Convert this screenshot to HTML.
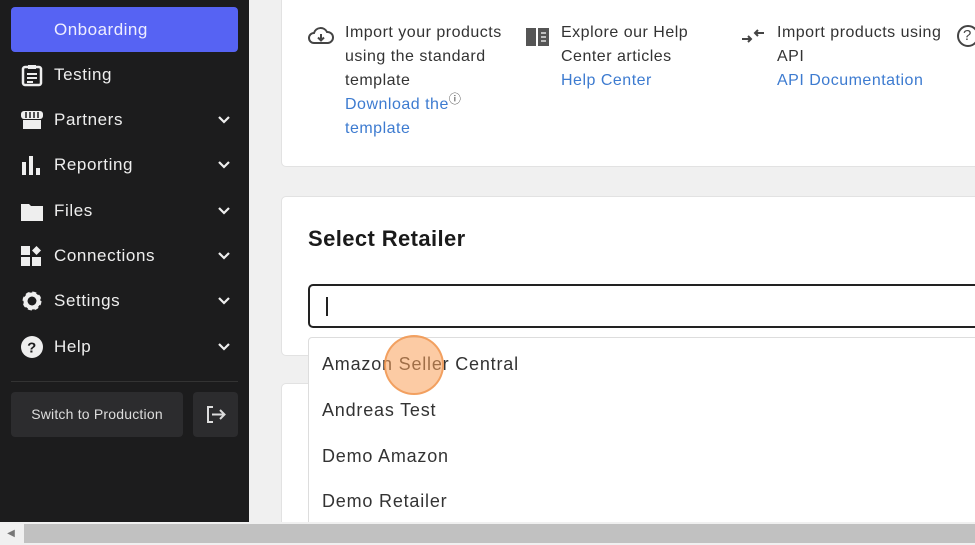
<!DOCTYPE html>
<html><head><style>
*{margin:0;padding:0;box-sizing:border-box}
body{width:975px;height:545px;overflow:hidden;background:#f0f0f0;font-family:"Liberation Sans",sans-serif;position:relative}
.sb{position:absolute;left:0;top:0;width:249px;height:522px;background:#1c1c1d}
.onb{position:absolute;left:11px;top:7px;width:227px;height:45px;background:#5663f3;border-radius:4px;color:#eef;font-size:17px;line-height:45px;padding-left:43px;letter-spacing:0.5px}
.it{position:absolute;left:0;width:249px;height:30px;color:#eee;font-size:17px;line-height:30px;letter-spacing:0.6px}
.it span{position:absolute;left:54px}
.it svg.ic{position:absolute;left:20px;top:3px}
.it .ch{position:absolute;left:216px;top:7px}
.div{position:absolute;left:11px;top:381px;width:227px;height:1px;background:#333}
.sw{position:absolute;left:11px;top:392px;width:172px;height:45px;background:#2c2c2e;border-radius:4px;color:#ddd;font-size:14px;line-height:45px;text-align:center;letter-spacing:0.2px}
.lo{position:absolute;left:193px;top:392px;width:45px;height:45px;background:#2c2c2e;border-radius:4px}
.card{position:absolute;background:#fff;border:1px solid #e2e2e2;border-radius:5px}
.t{position:absolute;font-size:16px;color:#333;line-height:24px;letter-spacing:0.5px}
.a{color:#3d7bd0}
.dd{position:absolute;left:308px;top:337px;width:680px;height:200px;background:#fff;border:1px solid #ddd;border-radius:4px}
.o{position:absolute;left:322px;font-size:18px;color:#333;letter-spacing:0.8px}
.sc{position:absolute;left:0;top:522px;width:975px;height:23px;background:#f0f0f0}
</style></head><body>
<div class="sb">
<div class="onb">Onboarding</div>
<div class="it" style="top:60px"><svg class="ic" width="24" height="24" viewBox="0 0 24 24"><rect x="3" y="4" width="18" height="18" rx="2" fill="none" stroke="#eee" stroke-width="2.5"/><rect x="8" y="2" width="8" height="4" fill="#eee"/><path d="M7 11h10M7 15h10M7 19h6" stroke="#eee" stroke-width="2"/></svg><span>Testing</span></div>
<div class="it" style="top:105px"><svg class="ic" width="24" height="24" viewBox="0 0 24 24"><rect x="1" y="3" width="22" height="8" rx="3" fill="#eee"/><rect x="3" y="12" width="18" height="9" fill="#eee"/><path d="M6 4v6M10 4v6M14 4v6M18 4v6" stroke="#1c1c1d" stroke-width="1.5"/></svg><span>Partners</span><svg class="ch" width="16" height="16" viewBox="0 0 16 16"><path d="M3 5l5 5 5-5" fill="none" stroke="#eee" stroke-width="2.2"/></svg></div>
<div class="it" style="top:150px"><svg class="ic" width="24" height="24" viewBox="0 0 24 24"><rect x="2" y="9" width="4" height="13" fill="#eee"/><rect x="9" y="3" width="4" height="19" fill="#eee"/><rect x="16" y="15" width="4" height="7" fill="#eee"/></svg><span>Reporting</span><svg class="ch" width="16" height="16" viewBox="0 0 16 16"><path d="M3 5l5 5 5-5" fill="none" stroke="#eee" stroke-width="2.2"/></svg></div>
<div class="it" style="top:196px"><svg class="ic" width="24" height="24" viewBox="0 0 24 24"><path d="M1 5h8l2 2h12v15H1z" fill="#eee"/></svg><span>Files</span><svg class="ch" width="16" height="16" viewBox="0 0 16 16"><path d="M3 5l5 5 5-5" fill="none" stroke="#eee" stroke-width="2.2"/></svg></div>
<div class="it" style="top:241px"><svg class="ic" width="24" height="24" viewBox="0 0 24 24"><rect x="1" y="2" width="9" height="9" fill="#eee"/><rect x="1" y="13" width="9" height="9" fill="#eee"/><rect x="12" y="13" width="9" height="9" fill="#eee"/><path d="M16.5 2l4.5 4.5-4.5 4.5-4.5-4.5z" fill="#eee"/></svg><span>Connections</span><svg class="ch" width="16" height="16" viewBox="0 0 16 16"><path d="M3 5l5 5 5-5" fill="none" stroke="#eee" stroke-width="2.2"/></svg></div>
<div class="it" style="top:286px"><svg class="ic" width="24" height="24" viewBox="0 0 24 24"><circle cx="12" cy="12" r="7" fill="none" stroke="#eee" stroke-width="5" stroke-dasharray="3.3 2.2"/><circle cx="12" cy="12" r="6.5" fill="none" stroke="#eee" stroke-width="4"/></svg><span>Settings</span><svg class="ch" width="16" height="16" viewBox="0 0 16 16"><path d="M3 5l5 5 5-5" fill="none" stroke="#eee" stroke-width="2.2"/></svg></div>
<div class="it" style="top:332px"><svg class="ic" width="24" height="24" viewBox="0 0 24 24"><circle cx="12" cy="12" r="11" fill="#eee"/><text x="12" y="17.5" font-size="15" font-weight="bold" text-anchor="middle" fill="#1c1c1d" font-family="Liberation Sans">?</text></svg><span>Help</span><svg class="ch" width="16" height="16" viewBox="0 0 16 16"><path d="M3 5l5 5 5-5" fill="none" stroke="#eee" stroke-width="2.2"/></svg></div>
<div class="div"></div>
<div class="sw">Switch to Production</div>
<div class="lo"><svg width="45" height="45" viewBox="0 0 45 45"><path d="M20 15h-5v15h5" fill="none" stroke="#ddd" stroke-width="2"/><path d="M19 22.5h12M27 18l4.5 4.5L27 27" fill="none" stroke="#ddd" stroke-width="2"/></svg></div>
</div>
<div class="card" style="left:281px;top:-5px;width:710px;height:172px"></div>
<svg style="position:absolute;left:307px;top:25px" width="28" height="22" viewBox="0 0 28 22"><path d="M7 18a5 5 0 0 1 0-10 7 7 0 0 1 13-1 5.5 5.5 0 0 1 1 11z" fill="none" stroke="#444" stroke-width="2"/><path d="M14 9v6M11 12.5l3 3 3-3" fill="none" stroke="#444" stroke-width="2"/></svg>
<div class="t" style="left:345px;top:21px">Import your products<br>using the standard<br>template<br><span class="a">Download the</span><span style="font-size:12px;position:relative;top:-6px">ⓘ</span><br><span class="a">template</span></div>
<svg style="position:absolute;left:524px;top:26px" width="28" height="22" viewBox="0 0 28 22"><path d="M2 2h10v18H2zM14 2h11v18H14z" fill="#555"/><path d="M17 7h5M17 11h5M17 15h5" stroke="#fff" stroke-width="1.3"/></svg>
<div class="t" style="left:561px;top:21px">Explore our Help<br>Center articles<br><span class="a">Help Center</span></div>
<svg style="position:absolute;left:740px;top:27px" width="26" height="18" viewBox="0 0 26 18"><path d="M2 12h9M8 9l3 3-3 3M24 6h-9M18 3l-3 3 3 3" fill="none" stroke="#444" stroke-width="2"/></svg>
<div class="t" style="left:777px;top:21px">Import products using<br>API<br><span class="a">API Documentation</span></div>
<div style="position:absolute;left:957px;top:25px;width:22px;height:22px;border:2px solid #444;border-radius:50%;font-size:15px;line-height:18px;padding-left:4px;color:#444">?</div>
<div class="card" style="left:281px;top:196px;width:710px;height:160px"></div>
<div style="position:absolute;left:308px;top:226px;font-size:22px;font-weight:bold;color:#1a1a1a;letter-spacing:0.4px">Select Retailer</div>
<div style="position:absolute;left:308px;top:284px;width:690px;height:44px;border:2px solid #222;border-radius:5px;background:#fff"><div style="position:absolute;left:16px;top:11px;width:2px;height:19px;background:#222"></div></div>
<div class="card" style="left:281px;top:383px;width:710px;height:160px"></div>
<div class="dd"></div>
<div class="o" style="top:354px">Amazon Seller Central</div>
<div class="o" style="top:400px">Andreas Test</div>
<div class="o" style="top:446px">Demo Amazon</div>
<div class="o" style="top:491px">Demo Retailer</div>
<div style="position:absolute;left:384px;top:335px;width:60px;height:60px;border-radius:50%;background:rgba(250,160,90,0.55);border:2px solid rgba(240,150,80,0.8)"></div>
<div class="sc"><div style="position:absolute;left:0;top:0;width:22px;height:23px;background:#f0f0f0;color:#777;font-size:10px;line-height:23px;text-align:center">◀</div><div style="position:absolute;left:24px;top:2px;width:951px;height:19px;background:#c1c1c1"></div></div>
</body></html>
